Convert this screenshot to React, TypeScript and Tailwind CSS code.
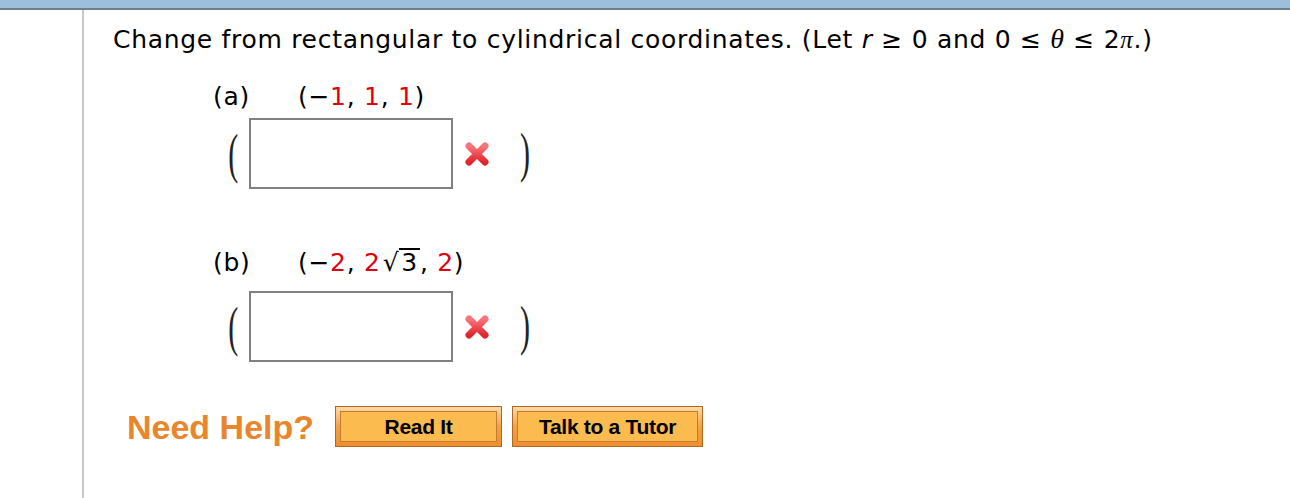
import React from "react";

const sans = "font-['DejaVu_Sans',sans-serif]";
const serif = "font-['Liberation_Serif',serif]";

function Paren({ side }: { side: "(" | ")" }) {
  return (
    <span className={`${serif} inline-block text-[30px] leading-none text-[#222] scale-y-[1.82]`}>{side}</span>
  );
}

function WrongMark() {
  return (
    <svg width="28" height="28" viewBox="0 0 28 28">
      <defs>
        <linearGradient id="xg" x1="0" y1="0" x2="0" y2="1">
          <stop offset="0" stopColor="#f7767b" />
          <stop offset="1" stopColor="#e0262e" />
        </linearGradient>
      </defs>
      <path d="M6 6 L22 22 M22 6 L6 22" stroke="url(#xg)" strokeWidth="7" strokeLinecap="round" />
    </svg>
  );
}

function AnswerRow() {
  return (
    <div className="flex items-center ml-[109px]">
      <div className="w-[27px] flex justify-end pr-[10px]"><Paren side="(" /></div>
      <div className="w-[204px] h-[71px] border-2 border-[#808080] bg-white" />
      <div className="ml-[10px] w-[28px]"><WrongMark /></div>
      <div className="ml-[29px]"><Paren side=")" /></div>
    </div>
  );
}

function HelpButton({ label, w }: { label: string; w: string }) {
  return (
    <div className={`${w} h-[41px] border border-[#ad6824] bg-gradient-to-b from-[#fdd9a6] via-[#f5a040] to-[#ef8e2e] p-[4px]`}>
      <div className="h-full border border-[#c07d38] bg-[#fbbb4f] flex items-center justify-center">
        <span className="font-['Liberation_Sans',sans-serif] font-bold text-[21px] leading-none text-black tracking-[-0.3px]">{label}</span>
      </div>
    </div>
  );
}

export default function App() {
  return (
    <div className="w-[1290px] h-[498px] bg-white overflow-hidden flex flex-col">
      <div className="h-[8px] bg-[#9dbfdc]" />
      <div className="h-[2px] bg-[#6e7f8b]" />
      <div className="flex flex-1">
        <div className="w-[84px] border-r-2 border-[#c8c8c8]" />
        <div className={`${sans} pl-[29px] pt-[14px] text-[25px] leading-[30px] tracking-[0.7px] text-black`}>
          <p>
            Change from rectangular to cylindrical coordinates. (Let <i>r</i> ≥ 0 and 0 ≤{" "}
            <i className={`${serif} text-[28px]`}>θ</i> ≤ 2<i className={serif}>π</i>.)
          </p>

          <div className="mt-[27px] ml-[100px] flex">
            <span className="w-[85px]">(a)</span>
            <span>
              (−<span className="text-[#e0000f]">1</span>, <span className="text-[#e0000f]">1</span>,{" "}
              <span className="text-[#e0000f]">1</span>)
            </span>
          </div>
          <div className="mt-[6px]"><AnswerRow /></div>

          <div className="mt-[59px] ml-[100px] flex">
            <span className="w-[85px]">(b)</span>
            <span className="flex items-baseline">
              (−<span className="text-[#e0000f]">2</span>,&nbsp;<span className="text-[#e0000f]">2</span>
              <span className="ml-[2px]">√</span>
              <span className="border-t-2 border-black leading-[26px] px-[2px]">3</span>,&nbsp;
              <span className="text-[#e0000f]">2</span>)
            </span>
          </div>
          <div className="mt-[13px]"><AnswerRow /></div>

          <div className="mt-[44px] ml-[14px] flex items-center">
            <span className="font-['Liberation_Sans',sans-serif] font-bold text-[34px] leading-none tracking-normal text-[#e9862b]">Need Help?</span>
            <div className="ml-[21px] flex gap-[10px]">
              <HelpButton label="Read It" w="w-[167px]" />
              <HelpButton label="Talk to a Tutor" w="w-[191px]" />
            </div>
          </div>
        </div>
      </div>
    </div>
  );
}
